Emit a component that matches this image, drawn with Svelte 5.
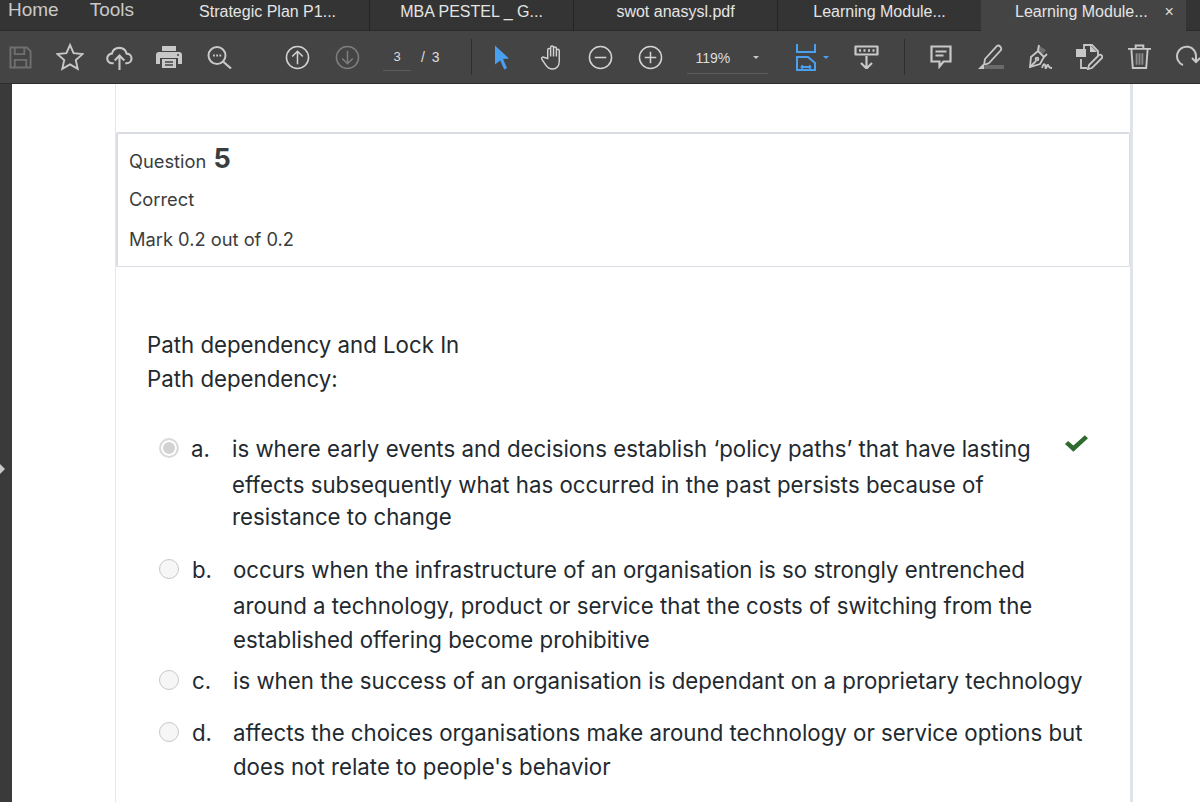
<script>
  const tabs = ["Strategic Plan P1...", "MBA PESTEL _ G...", "swot anasysl.pdf", "Learning Module...", "Learning Module..."];
  const options = [
    { letter: "a.", lines: ["is where early events and decisions establish ‘policy paths’ that have lasting", "effects subsequently what has occurred in the past persists because of", "resistance to change"], checked: true },
    { letter: "b.", lines: ["occurs when the infrastructure of an organisation is so strongly entrenched", "around a technology, product or service that the costs of switching from the", "established offering become prohibitive"] },
    { letter: "c.", lines: ["is when the success of an organisation is dependant on a proprietary technology"] },
    { letter: "d.", lines: ["affects the choices organisations make around technology or service options but", "does not relate to people's behavior"] }
  ];
</script>

<div class="app">
  <div class="tabbar">
    <span class="menu home">Home</span>
    <span class="menu tools">Tools</span>
    <div class="tabs">
      {#each tabs as tab, i}
        <div class="tab" class:active={i === 4}>
          <span>{tab}</span>
          {#if i === 4}<span class="close">×</span>{/if}
        </div>
      {/each}
    </div>
  </div>

  <div class="toolbar">
    <svg class="ic save" viewBox="0 0 24 24" fill="none" stroke="#6f6f6f" stroke-width="2"><path d="M1.500 1.500h17l4 4v17h-21z"/><path d="M6 1.500v7h10v-7M6 22.500v-8h12v8"/></svg>
    <svg class="ic star" viewBox="0 0 28 28" fill="none" stroke="#c8c8c8" stroke-width="1.900"><path d="M14 2l3.600 8.200 8.900.9-6.700 6 1.900 8.800L14 21.400 6.300 25.900l1.900-8.800-6.700-6 8.900-.9z"/></svg>
    <svg class="ic cloud" viewBox="0 0 28 26" fill="none" stroke="#c8c8c8" stroke-width="2.200"><path d="M8 19H6.500a5 5 0 0 1-.5-10 8 8 0 0 1 15.500 0 5 5 0 0 1 0 10H20"/><path d="M14 26V11M9 16l5-5 5 5"/></svg>
    <svg class="ic print" viewBox="0 0 26 22"><path fill="#c8c8c8" d="M6 0h14v5H6zM3 6h20a3 3 0 0 1 3 3v9h-4v-6H4v6H0V9a3 3 0 0 1 3-3z"/><path fill="#c8c8c8" d="M6 13h14v9H6z"/><path stroke="#444" stroke-width="1.300" d="M9 16h8M9 19h8"/><circle cx="22" cy="9" r="1" fill="#444"/></svg>
    <svg class="ic zoom" viewBox="0 0 25 23" fill="none" stroke="#c8c8c8" stroke-width="2"><circle cx="10" cy="9.500" r="8.500"/><path d="M16 15.500l8 7" stroke-width="2.200"/><path d="M6 9.500h1.800M9.200 9.500h1.800M12.400 9.500h1.800"/></svg>
    <svg class="ic up" viewBox="0 0 26 26" fill="none" stroke="#d2d2d2" stroke-width="1.600"><circle cx="13" cy="13" r="11.500"/><path d="M13 20V6.500M7.500 12L13 6.500l5.500 5.500"/></svg>
    <svg class="ic down" viewBox="0 0 26 26" fill="none" stroke="#7d7d7d" stroke-width="1.600"><circle cx="13" cy="13" r="11.500"/><path d="M13 6v13.500M7.500 14l5.500 5.500 5.500-5.500"/></svg>
    <div class="pager"><span class="cur">3</span><span class="total">/ 3</span></div>
    <div class="sep first"></div>
    <svg class="ic cursor" viewBox="0 0 16 26"><path fill="#4a9ff0" d="M1 1l14 13-6 .5 4 9-2.800 1.500-4-9L1 20z"/></svg>
    <svg class="ic hand" viewBox="0 0 26 28" fill="none" stroke="#d2d2d2" stroke-width="1.500"><path d="M7 15V6a1.500 1.500 0 0 1 3 0v7V3.500a1.500 1.500 0 0 1 3 0V13 4.500a1.500 1.500 0 0 1 3 0V13 7a1.500 1.500 0 0 1 3 0v11c0 5-3 8-7 8-3 0-5-1-7-4l-4-6c-1-2 1-3 2.500-2z"/></svg>
    <svg class="ic minus" viewBox="0 0 26 26" fill="none" stroke="#d2d2d2" stroke-width="1.600"><circle cx="13" cy="13" r="11.500"/><path d="M7 13h12"/></svg>
    <svg class="ic plus" viewBox="0 0 26 26" fill="none" stroke="#d2d2d2" stroke-width="1.600"><circle cx="13" cy="13" r="11.500"/><path d="M7 13h12M13 7v12"/></svg>
    <div class="zoomval"><span>119%</span><i></i></div>
    <svg class="ic fit" viewBox="0 0 20 27" fill="none" stroke="#4a9ff0" stroke-width="2"><path d="M1 0v8h18V0M1 27V13h11l7 6v8M1 26h18M5 23h10M5 23l2-1.500M5 23l2 1.500M15 23l-2-1.500M15 23l-2 1.500" /></svg>
    <i class="fit-caret"></i>
    <svg class="ic ruler" viewBox="0 0 25 24" fill="none" stroke="#c8c8c8" stroke-width="2.200"><path d="M1.500 1.500h22v8h-22z" stroke-linejoin="round"/><path d="M5 5.500h2M9.500 5.500h2M14 5.500h2M18.500 5.500h2" stroke-width="2.400"/><path d="M12.500 11v12M7 18l5.500 5.500L18 18"/></svg>
    <div class="sep second"></div>
    <svg class="ic comment" viewBox="0 0 22 24" fill="none" stroke="#c8c8c8" stroke-width="2.200"><path d="M1.500 1.500h19v15h-7l-4 5v-5h-8z"/><path d="M5.500 6.500h11M5.500 10.500h8"/></svg>
    <svg class="ic pen" viewBox="0 0 26 26" fill="none"><path stroke="#c8c8c8" stroke-width="1.800" d="M7 15L19 2c2-1.500 5 1.500 4 4L11 19l-5 2z"/><path fill="#c8c8c8" d="M0 25l5-5 3 2-2 3z"/><path fill="#6a6a6a" d="M6 21h20v4H6z"/></svg>
    <svg class="ic sign" viewBox="0 0 26 26" fill="none" stroke="#c8c8c8" stroke-width="1.800"><path fill="#6e6e6e" stroke="none" d="M11 1l8 5-3 4-6-4z"/><path d="M3 23l1-10 7-6 6 6-4 7z"/><path d="M3 23l6-6"/><circle cx="10" cy="15" r="1.400"/><path d="M11 7l1-6M17 13l3-3M15 24c1-3 2-5 3-3s0 4 1 3 1-4 2-3 0 3 4 3"/></svg>
    <svg class="ic pages" viewBox="0 0 28 26" fill="none" stroke="#c8c8c8" stroke-width="1.800"><path d="M9 6V1h8l6 6v5"/><path fill="#c8c8c8" stroke="none" d="M1 5h10v8H1zM15 1l7 7h-7z"/><path d="M6 15v9h6"/><path d="M14 21l-1 4 4-1 10-10c1-2-1-4-3-3z"/></svg>
    <svg class="ic trash" viewBox="0 0 24 26" fill="none" stroke="#c8c8c8" stroke-width="2"><path d="M0 4.500h24M8 4.500V1h8v3.500M3.500 4.500l1.500 20h14l1.500-20"/><path stroke="#8a8a8a" d="M9 9v12M12 9v12M15 9v12"/></svg>
    <svg class="ic rotate" viewBox="0 0 24 26" fill="none" stroke="#c8c8c8" stroke-width="2"><path d="M7 21a9.500 9.500 0 1 1 13-8v4"/><path d="M16 14l4 4 4-4"/></svg>
  </div>

  <div class="main">
    <div class="rail"><i class="rail-arrow"></i></div>
    <div class="page">
      <div class="column">
        <div class="info">
          <div class="qno">Question <b>5</b></div>
          <div class="state">Correct</div>
          <div class="grade">Mark 0.2 out of 0.2</div>
        </div>
        <div class="content">
          <p class="qtext">Path dependency and Lock In</p>
          <p class="qtext">Path dependency:</p>
          <div class="answers">
            {#each options as opt}
              <div class="answer answer-{opt.letter[0]}">
                <span class="radio" class:on={opt.checked}></span>
                <span class="letter">{opt.letter}</span>
                <div class="text">
                  {#each opt.lines as line}<div>{line}</div>{/each}
                </div>
                {#if opt.checked}
                  <svg class="tick" viewBox="0 0 22 16"><path fill="#2f6b2f" d="M0 8.500l3-3 5 4.500L19 0l3 3L8 16z"/></svg>
                {/if}
              </div>
            {/each}
          </div>
        </div>
      </div>
    </div>
  </div>
</div>

<style>
  :global(body) {
    margin: 0;
    overflow: hidden;
    background: #fff;
  }

  .app {
    width: 1200px;
    height: 802px;
    display: flex;
    flex-direction: column;
    overflow: hidden;
  }

  .tabbar {
    height: 31px;
    flex: none;
    display: flex;
    background: #343434;
    font-family: "Liberation Sans", Arial, sans-serif;
    color: #e4e4e4;
    box-sizing: border-box;
    border-bottom: 1px solid #2a2a2a;
  }

  .menu {
    font-size: 19px;
    line-height: 19px;
    color: #c9c9c9;
  }

  .home {
    margin-left: 8px;
  }

  .tools {
    margin-left: 31px;
  }

  .tabs {
    display: flex;
    margin-left: 32px;
  }

  .tab {
    width: 204px;
    height: 31px;
    box-sizing: border-box;
    display: flex;
    justify-content: center;
    padding-top: 2px;
    font-size: 16px;
    line-height: 19px;
    border-right: 1px solid #242424;
  }

  .tab:nth-child(4) {
    width: 203px;
    border-right: 0;
  }

  .tab.active {
    width: 205px;
    background: #444;
    border-right: 0;
    justify-content: flex-start;
    padding-left: 34px;
  }

  .close {
    margin-left: 17px;
    font-size: 16px;
    color: #ddd;
  }

  .toolbar {
    height: 53px;
    flex: none;
    display: flex;
    align-items: center;
    background: #444;
    border-bottom: 1px solid #2e2e2e;
    box-sizing: border-box;
    font-family: "Liberation Sans", Arial, sans-serif;
    color: #ddd;
  }

  .ic {
    flex: none;
    display: block;
  }

  .save { width: 23px; height: 23px; margin-left: 9px; }
  .star { width: 28px; height: 28px; margin-left: 24px; }
  .cloud { width: 27px; height: 25px; margin-left: 22px; }
  .print { width: 26px; height: 22px; margin-left: 23px; }
  .zoom { width: 25px; height: 23px; margin-left: 25px; }
  .up { width: 25px; height: 25px; margin-left: 53px; }
  .down { width: 25px; height: 25px; margin-left: 25px; }

  .pager {
    width: 64px;
    margin-left: 23px;
    display: flex;
    font-size: 13px;
    height: 27px;
    line-height: 26px;
  }

  .cur {
    width: 28px;
    text-align: center;
    border-bottom: 1px solid #5d5d5d;
  }

  .total {
    margin-left: 10px;
    font-size: 14px;
    word-spacing: 3px;
  }

  .sep {
    width: 1px;
    height: 36px;
    background: #2f2f2f;
    flex: none;
  }

  .sep.first { margin-left: 25px; }

  .cursor { width: 16px; height: 27px; margin-left: 22px; }
  .hand { width: 25px; height: 29px; margin-left: 31px; }
  .minus { width: 25px; height: 25px; margin-left: 22px; }
  .plus { width: 25px; height: 25px; margin-left: 25px; }

  .zoomval {
    width: 83px;
    height: 31px;
    margin-left: 24px;
    margin-top: 2px;
    display: flex;
    align-items: center;
    justify-content: space-between;
    box-sizing: border-box;
    padding: 0 9px;
    font-size: 14px;
    border-bottom: 1px solid #5d5d5d;
  }

  .zoomval i, .fit-caret {
    width: 0;
    height: 0;
    border-left: 3px solid transparent;
    border-right: 3px solid transparent;
    border-top: 3px solid #c8c8c8;
  }

  .fit { width: 20px; height: 27px; margin-left: 28px; }

  .fit-caret {
    flex: none;
    margin-left: 7px;
    border-top-color: #4a9ff0;
  }

  .ruler { width: 25px; height: 24px; margin-left: 25px; }
  .sep.second { margin-left: 25px; }
  .comment { width: 22px; height: 24px; margin-left: 25px; }
  .pen { width: 26px; height: 26px; margin-left: 26px; }
  .sign { width: 26px; height: 26px; margin-left: 23px; }
  .pages { width: 28px; height: 26px; margin-left: 22px; }
  .trash { width: 23px; height: 26px; margin-left: 25px; }
  .rotate { width: 24px; height: 26px; margin-left: 25px; }

  .main {
    flex: 1;
    display: flex;
    min-height: 0;
  }

  .rail {
    width: 12px;
    flex: none;
    background: #3a3a3a;
    position: relative;
  }

  .rail-arrow {
    position: absolute;
    left: 0;
    top: 380px;
    border-left: 5px solid #c8c8c8;
    border-top: 5px solid transparent;
    border-bottom: 5px solid transparent;
  }

  .page {
    flex: 1;
    padding-left: 103px;
    background: #fff;
  }

  .column {
    width: 1018px;
    height: 100%;
    box-sizing: border-box;
    border-left: 1px solid #e3e6ea;
    border-right: 3px solid #e0e3e8;
    padding-top: 48px;
    font-family: Inter, "Liberation Sans", sans-serif;
    color: #2b2f33;
  }

  .info {
    height: 135px;
    box-sizing: border-box;
    border: 2px solid #d9dde3;
    border-right-width: 1px;
    border-bottom-width: 1px;
    border-radius: 2px;
    padding: 9px 11px 0;
    background: #fff;
    font-size: 18.300px;
    color: #3a3d40;
  }

  .qno {
    height: 32px;
    line-height: 32px;
  }

  .qno b {
    font-size: 27px;
    font-weight: 700;
    margin-left: 2px;
  }

  .state, .grade {
    line-height: 26px;
  }

  .state {
    margin-top: 11px;
  }

  .grade {
    margin-top: 14px;
  }

  .content {
    padding: 61px 0 0 31px;
  }

  .qtext {
    margin: 0;
    font-size: 22.250px;
    line-height: 34px;
    color: #24292d;
  }

  .answers {
    margin-top: 36px;
    font-size: 22.250px;
    color: #1f2a30;
  }

  .answer {
    display: flex;
    position: relative;
    line-height: 34px;
  }

  .answer-b { margin-top: 19px; }
  .answer-c { margin-top: 7px; }
  .answer-d { margin-top: 18px; }

  .text div:nth-child(2) { margin-top: 2px; }
  .answer-a .text div:nth-child(3) { margin-top: -2px; }
  .answer-d .text div:nth-child(2) { margin-top: 0; }

  .answer-b .letter, .answer-c .letter, .answer-d .letter {
    margin-left: 13px;
  }

  .radio {
    width: 20px;
    height: 20px;
    box-sizing: border-box;
    margin: 6px 0 0 12px;
    border: 1px solid #c8c8c8;
    border-radius: 50%;
    background: #f6f6f6;
    flex: none;
  }

  .radio.on {
    border: 2px solid #dadada;
    background: #d2d2d2;
    box-shadow: inset 0 0 0 2px #fff;
  }

  .letter {
    width: 41px;
    margin-left: 12px;
    flex: none;
  }

  .text {
    white-space: nowrap;
  }

  .tick {
    position: absolute;
    left: 918px;
    top: 3px;
    width: 23px;
    height: 17px;
  }
</style>
